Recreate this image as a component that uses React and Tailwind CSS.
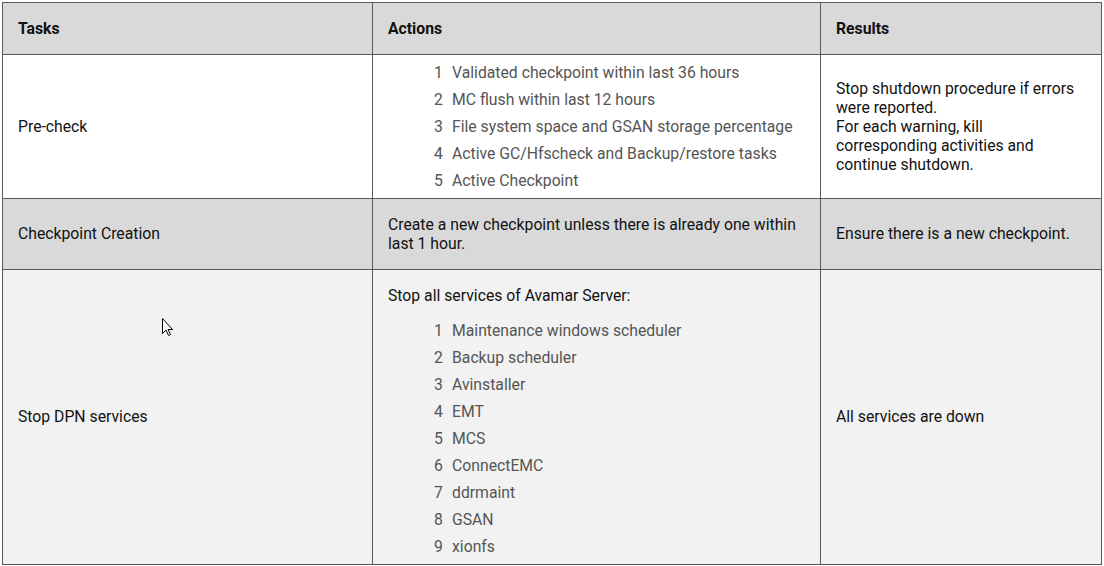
export default function App() {
  const pre = [
    "Validated checkpoint within last 36 hours",
    "MC flush within last 12 hours",
    "File system space and GSAN storage percentage",
    "Active GC/Hfscheck and Backup/restore tasks",
    "Active Checkpoint",
  ];
  const svcs = [
    "Maintenance windows scheduler",
    "Backup scheduler",
    "Avinstaller",
    "EMT",
    "MCS",
    "ConnectEMC",
    "ddrmaint",
    "GSAN",
    "xionfs",
  ];
  const List = ({ items }) => (
    <ol className="ml-[46px] text-[#555]">
      {items.map((t, i) => (
        <li key={i} className="flex py-[4px]">
          <span className="w-[18px] shrink-0">{i + 1}</span>
          <span>{t}</span>
        </li>
      ))}
    </ol>
  );
  const td = "border border-[#595959] px-[15px] align-middle";
  return (
    <div
      className="relative w-[1104px] h-[566px] bg-white p-[2px] text-[15.75px] leading-[19px] text-[#111]"
      style={{ fontFamily: "Roboto, 'Liberation Sans', sans-serif" }}
    >
      <table className="border-collapse w-[1100px] table-fixed">
        <colgroup>
          <col className="w-[370px]" />
          <col className="w-[448px]" />
          <col />
        </colgroup>
        <tbody>
          <tr className="h-[52px] bg-[#d9d9d9] font-bold">
            <td className={td}>Tasks</td>
            <td className={td}>Actions</td>
            <td className={td}>Results</td>
          </tr>
          <tr className="h-[144px] bg-white">
            <td className={td}>Pre-check</td>
            <td className={td}>
              <List items={pre} />
            </td>
            <td className={td}>
              Stop shutdown procedure if errors were reported.
              <br />
              For each warning, kill corresponding activities and continue shutdown.
            </td>
          </tr>
          <tr className="h-[71px] bg-[#d9d9d9]">
            <td className={`${td} pb-[2px]`}>Checkpoint Creation</td>
            <td className={td}>
              Create a new checkpoint unless there is already one within last 1 hour.
            </td>
            <td className={`${td} pb-[2px]`}>Ensure there is a new checkpoint.</td>
          </tr>
          <tr className="h-[295px] bg-[#f2f2f2]">
            <td className={`${td} pb-[2px]`}>Stop DPN services</td>
            <td className={`${td} !align-top pt-[16px]`}>
              <div>Stop all services of Avamar Server:</div>
              <div className="mt-[12px]">
                <List items={svcs} />
              </div>
            </td>
            <td className={`${td} pb-[2px]`}>All services are down</td>
          </tr>
        </tbody>
      </table>
      <svg
        className="absolute left-[162px] top-[318px]"
        width="12"
        height="19"
        viewBox="0 0 12 19"
      >
        <path
          d="M0.5 0.5 L0.5 15.5 L4 12 L6.5 17.5 L8.5 16.5 L6 11.5 L10.5 11.5 Z"
          fill="white"
          stroke="black"
          strokeWidth="1"
          strokeLinejoin="miter"
        />
      </svg>
    </div>
  );
}
